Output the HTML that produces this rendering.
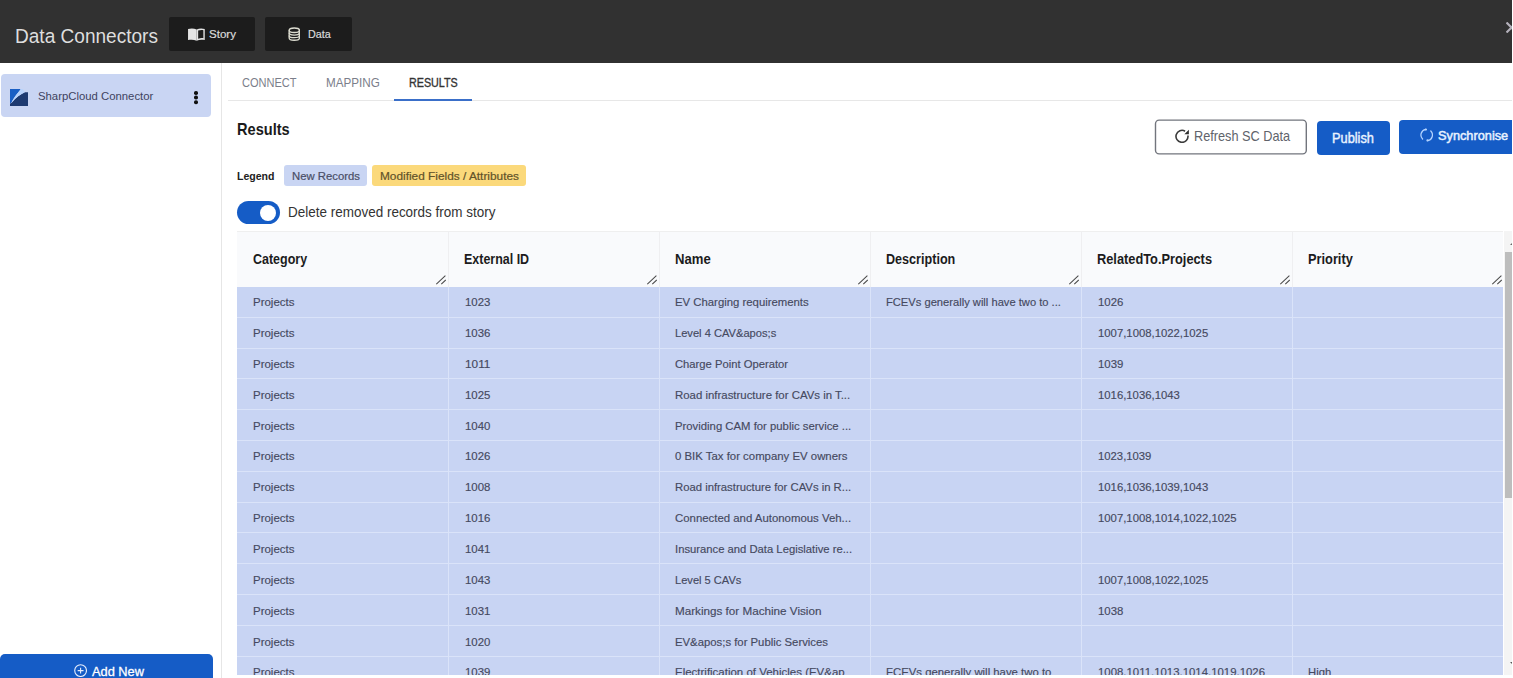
<!DOCTYPE html>
<html>
<head>
<meta charset="utf-8">
<title>Data Connectors</title>
<style>
*{box-sizing:border-box;margin:0;padding:0}
html,body{width:1513px;height:678px;overflow:hidden;background:#fff}
body{font-family:"Liberation Sans",sans-serif;position:relative;color:#222}
#clip{position:absolute;left:0;top:0;width:1512px;height:678px;overflow:hidden}
.abs{position:absolute}
.t{position:absolute;white-space:pre;line-height:1;transform-origin:0 50%}
#hdr{left:0;top:0;width:1513px;height:62.6px;background:#313131}
.hbtn{top:17px;height:34px;background:#1c1c1c;border-radius:2px}
#side{left:0;top:62.6px;width:222px;height:616px;background:#fff;border-right:1px solid #e6e6e6}
#item{left:1px;top:74px;width:210px;height:43px;background:#c9d5f3;border-radius:4px}
#addnew{left:0;top:654px;width:212.6px;height:30px;background:#155cc6;border-radius:5px 5px 0 0}
#tabline{left:228px;top:100px;width:1285px;height:1px;background:#e7e7e7}
#tabsel{left:393.5px;top:99px;width:78.5px;height:2px;background:#3a6fc9}
.btn{border-radius:4px}
.chip{height:21.3px;border-radius:3px}
#tbl{left:237px;top:231px;width:1266px;height:444.2px;background:#c8d4f3;overflow:hidden}
#thead{left:0;top:0;width:1267px;height:56px;background:#f9fafc;border-top:1px solid #efefef}
.rs{left:0;width:1267px;height:1px;background:#dae3f9}
.cs{top:56px;width:1px;height:400px;background:#dae3f9}
.hs{top:0;width:1px;height:56px;background:#efeff1}
</style>
</head>
<body>
<div id="clip">

<div id="hdr" class="abs"></div>
<div class="t" style="left:15.20px;top:25.85px;font-size:20.5px;color:#dedede;transform:scaleX(0.9295);">Data Connectors</div>
<div class="abs hbtn" style="left:169px;width:85.7px"></div>
<div class="abs hbtn" style="left:265px;width:87px"></div>
<svg class="abs" style="left:188.2px;top:27.8px" width="16.8" height="13" viewBox="0 0 18 14"><path d="M0 1.2 C3 0 6.4 0.2 9.3 1.7 L9.3 13.6 C6.4 12.4 3 12.2 0 13 Z" fill="#e4e4e4"/><path d="M9.3 1.7 C12 0.2 15 0 18 1.2 L18 13 C15 12.2 12 12.4 9.3 13.6 Z M10.9 2.8 L10.9 11.5 C13 10.8 15 10.7 16.5 11 L16.5 2.4 C15 2 13 2.1 10.9 2.8 Z" fill="#e4e4e4" fill-rule="evenodd"/></svg>
<div class="t" style="left:209.00px;top:28.99px;font-size:11px;color:#dadada;transform:scaleX(1.0511);-webkit-text-stroke:0.2px #dadada;">Story</div>
<svg class="abs" style="left:287.8px;top:26.8px" width="12.6" height="14.4" viewBox="0 0 14 15.5" fill="none" stroke="#dcdcd0" stroke-width="1.5"><ellipse cx="7" cy="3.4" rx="5.7" ry="2.5"/><path d="M1.3 3.4 V12 C1.3 13.4 3.8 14.5 7 14.5 S12.7 13.4 12.7 12 V3.4"/><path d="M1.3 6.2 C1.3 7.6 3.8 8.7 7 8.7 S12.7 7.6 12.7 6.2"/><path d="M1.3 9.1 C1.3 10.5 3.8 11.6 7 11.6 S12.7 10.5 12.7 9.1"/></svg>
<div class="t" style="left:307.60px;top:28.99px;font-size:11px;color:#dadada;transform:scaleX(0.9806);-webkit-text-stroke:0.2px #dadada;">Data</div>
<svg class="abs" style="left:1505.5px;top:22px" width="11" height="11" viewBox="0 0 11 11" stroke="#b4b1bb" stroke-width="2.2" fill="none"><path d="M0.5 0.5 L10.5 10.5 M10.5 0.5 L0.5 10.5"/></svg>
<div id="side" class="abs"></div>
<div id="item" class="abs"></div>
<svg class="abs" style="left:10.3px;top:88.5px" width="18.1" height="17.5" viewBox="0 0 100 100" preserveAspectRatio="none"><path d="M0 0 H59 C50 16 24 44 9 76 L0 84 Z" fill="#1a5fc4"/><path d="M100 18 H82 C60 28 30 50 9 79 L0 84 V100 H100 Z" fill="#1e3a70"/><path d="M59 0 H70 L82 18 C60 28 30 50 9 79 L9 76 C24 44 50 16 59 0 Z" fill="#b9d3fb"/></svg>
<div class="t" style="left:38.20px;top:90.63px;font-size:11.3px;color:#3e4360;transform:scaleX(1.0033);">SharpCloud Connector</div>
<div class="abs" style="left:194.3px;top:91.2px;width:3.6px;height:3.6px;border-radius:50%;background:#111;box-shadow:0 4.6px 0 #111,0 9.2px 0 #111"></div>
<div id="addnew" class="abs"></div>
<svg class="abs" style="left:73.8px;top:664.2px" width="13.2" height="13.2" viewBox="0 0 13 13" fill="none" stroke="#e8eefc" stroke-width="1.1"><circle cx="6.5" cy="6.5" r="5.8"/><path d="M6.5 3.6 V9.4 M3.6 6.5 H9.4"/></svg>
<div class="t" style="left:92.00px;top:665.03px;font-size:13.2px;color:#fff;transform:scaleX(0.9717);-webkit-text-stroke:0.3px #fff;">Add New</div>
<div class="t" style="left:241.80px;top:76.73px;font-size:12.6px;color:#7b7e8a;transform:scaleX(0.8767);">CONNECT</div>
<div class="t" style="left:325.60px;top:76.73px;font-size:12.6px;color:#7b7e8a;transform:scaleX(0.9278);">MAPPING</div>
<div class="t" style="left:408.80px;top:76.73px;font-size:12.6px;color:#333;transform:scaleX(0.8521);-webkit-text-stroke:0.35px #333;">RESULTS</div>
<div id="tabline" class="abs"></div><div id="tabsel" class="abs"></div>
<div class="t" style="left:237.30px;top:121.49px;font-size:16.2px;color:#1b1b1b;font-weight:bold;transform:scaleX(0.9011);">Results</div>
<svg class="abs" style="left:1153px;top:118px" width="157" height="39" viewBox="0 0 157 39"><rect x="2.5" y="2.1" width="150.8" height="33.8" rx="3.6" fill="#fff" stroke="#72757d" stroke-width="1.4"/></svg>
<svg class="abs" style="left:1175.1px;top:128.5px" width="14" height="14.4" viewBox="0 0 14 14.4"><path d="M12.94 6.5 A6 6 0 1 1 10.1 2.2" fill="none" stroke="#3a3a3a" stroke-width="1.6"/><path d="M13.9 0.7 V5.2 H9.4 Z" fill="#2e2e2e"/></svg>
<div class="t" style="left:1194.20px;top:128.90px;font-size:14.3px;color:#60636b;transform:scaleX(0.8901);">Refresh SC Data</div>
<div class="abs btn" style="left:1317px;top:120.8px;width:72.6px;height:33.8px;background:#155cc6"></div>
<div class="t" style="left:1332.30px;top:130.60px;font-size:14.3px;color:#e8f2ff;transform:scaleX(0.8954);-webkit-text-stroke:0.45px #e8f2ff;">Publish</div>
<div class="abs btn" style="left:1399.4px;top:119.9px;width:130px;height:34px;background:#155cc6"></div>
<svg class="abs" style="left:1419.6px;top:128.4px" width="13.4" height="14" viewBox="0 0 13.4 14" fill="none" stroke="#b4d4ff" stroke-width="1.25" stroke-linecap="round"><path d="M5.6 1.4 A5.7 5.7 0 0 0 2.6 11"/><path d="M7.8 12.6 A5.7 5.7 0 0 0 10.8 3"/><circle cx="5.9" cy="1.5" r="0.5" fill="#b4d4ff"/><circle cx="7.5" cy="12.5" r="0.5" fill="#b4d4ff"/></svg>
<div class="t" style="left:1438.00px;top:128.79px;font-size:13.6px;color:#e8f2ff;transform:scaleX(0.9383);-webkit-text-stroke:0.5px #e8f2ff;">Synchronise</div>
<div class="t" style="left:237.00px;top:170.69px;font-size:11px;color:#222;font-weight:bold;transform:scaleX(0.9585);">Legend</div>
<div class="abs chip" style="left:283.7px;top:165px;width:83.3px;background:#c9d5f3"></div>
<div class="t" style="left:291.70px;top:171.13px;font-size:11.3px;color:#4a4e66;transform:scaleX(1.0028);-webkit-text-stroke:0.2px #4a4e66;">New Records</div>
<div class="abs chip" style="left:372.2px;top:165px;width:154.3px;background:#fbd97b"></div>
<div class="t" style="left:380.00px;top:171.13px;font-size:11.3px;color:#62532a;transform:scaleX(1.0491);-webkit-text-stroke:0.2px #62532a;">Modified Fields / Attributes</div>
<div class="abs" style="left:237px;top:200.9px;width:42.8px;height:23.3px;border-radius:12px;background:#155cc6"></div>
<div class="abs" style="left:259.6px;top:205px;width:16px;height:16px;border-radius:50%;background:#fff"></div>
<div class="t" style="left:288.00px;top:204.90px;font-size:14.3px;color:#333;transform:scaleX(0.9428);">Delete removed records from story</div>
<div id="tbl" class="abs"><div id="thead" class="abs"></div>
<div class="abs hs" style="left:211px"></div><div class="abs cs" style="left:211px"></div>
<div class="abs hs" style="left:422px"></div><div class="abs cs" style="left:422px"></div>
<div class="abs hs" style="left:633px"></div><div class="abs cs" style="left:633px"></div>
<div class="abs hs" style="left:844px"></div><div class="abs cs" style="left:844px"></div>
<div class="abs hs" style="left:1055px"></div><div class="abs cs" style="left:1055px"></div>
<div class="abs rs" style="top:86px"></div>
<div class="abs rs" style="top:117px"></div>
<div class="abs rs" style="top:147px"></div>
<div class="abs rs" style="top:178px"></div>
<div class="abs rs" style="top:209px"></div>
<div class="abs rs" style="top:240px"></div>
<div class="abs rs" style="top:271px"></div>
<div class="abs rs" style="top:301px"></div>
<div class="abs rs" style="top:332px"></div>
<div class="abs rs" style="top:363px"></div>
<div class="abs rs" style="top:394px"></div>
<div class="abs rs" style="top:425px"></div>
</div>
<svg class="abs" style="left:435.7px;top:274.8px" width="10.5" height="10" viewBox="0 0 10.5 10" stroke="#4a4a4a" stroke-width="1.1" fill="none"><path d="M0.3 9.2 L9.4 0.6 M5.3 9.2 L9.8 5"/></svg>
<svg class="abs" style="left:646.7px;top:274.8px" width="10.5" height="10" viewBox="0 0 10.5 10" stroke="#4a4a4a" stroke-width="1.1" fill="none"><path d="M0.3 9.2 L9.4 0.6 M5.3 9.2 L9.8 5"/></svg>
<svg class="abs" style="left:857.7px;top:274.8px" width="10.5" height="10" viewBox="0 0 10.5 10" stroke="#4a4a4a" stroke-width="1.1" fill="none"><path d="M0.3 9.2 L9.4 0.6 M5.3 9.2 L9.8 5"/></svg>
<svg class="abs" style="left:1068.7px;top:274.8px" width="10.5" height="10" viewBox="0 0 10.5 10" stroke="#4a4a4a" stroke-width="1.1" fill="none"><path d="M0.3 9.2 L9.4 0.6 M5.3 9.2 L9.8 5"/></svg>
<svg class="abs" style="left:1279.7px;top:274.8px" width="10.5" height="10" viewBox="0 0 10.5 10" stroke="#4a4a4a" stroke-width="1.1" fill="none"><path d="M0.3 9.2 L9.4 0.6 M5.3 9.2 L9.8 5"/></svg>
<svg class="abs" style="left:1491.7px;top:274.8px" width="10.5" height="10" viewBox="0 0 10.5 10" stroke="#4a4a4a" stroke-width="1.1" fill="none"><path d="M0.3 9.2 L9.4 0.6 M5.3 9.2 L9.8 5"/></svg>
<div class="t" style="left:253.10px;top:252.45px;font-size:14px;color:#1c1c1c;font-weight:bold;transform:scaleX(0.8915);">Category</div>
<div class="t" style="left:464.10px;top:252.45px;font-size:14px;color:#1c1c1c;font-weight:bold;transform:scaleX(0.8901);">External ID</div>
<div class="t" style="left:675.10px;top:252.45px;font-size:14px;color:#1c1c1c;font-weight:bold;transform:scaleX(0.9386);">Name</div>
<div class="t" style="left:886.10px;top:252.45px;font-size:14px;color:#1c1c1c;font-weight:bold;transform:scaleX(0.8998);">Description</div>
<div class="t" style="left:1097.10px;top:252.45px;font-size:14px;color:#1c1c1c;font-weight:bold;transform:scaleX(0.9143);">RelatedTo.Projects</div>
<div class="t" style="left:1308.10px;top:252.45px;font-size:14px;color:#1c1c1c;font-weight:bold;transform:scaleX(0.9140);">Priority</div>
<div class="abs" style="left:0;top:0;width:1512px;height:675px;overflow:hidden">
<div class="t" style="left:253.20px;top:297.09px;font-size:11.35px;color:#454960;transform:scaleX(1.0101);-webkit-text-stroke:0.15px #454960;">Projects</div>
<div class="t" style="left:464.50px;top:297.09px;font-size:11.35px;color:#454960;transform:scaleX(1.0059);-webkit-text-stroke:0.15px #454960;">1023</div>
<div class="t" style="left:675.20px;top:297.09px;font-size:11.35px;color:#454960;transform:scaleX(1.0002);-webkit-text-stroke:0.15px #454960;">EV Charging requirements</div>
<div class="t" style="left:886.20px;top:297.09px;font-size:11.35px;color:#454960;transform:scaleX(0.9837);-webkit-text-stroke:0.15px #454960;">FCEVs generally will have two to ...</div>
<div class="t" style="left:1097.50px;top:297.09px;font-size:11.35px;color:#454960;transform:scaleX(1.0059);-webkit-text-stroke:0.15px #454960;">1026</div>
<div class="t" style="left:253.20px;top:327.95px;font-size:11.35px;color:#454960;transform:scaleX(1.0101);-webkit-text-stroke:0.15px #454960;">Projects</div>
<div class="t" style="left:464.50px;top:327.95px;font-size:11.35px;color:#454960;transform:scaleX(1.0059);-webkit-text-stroke:0.15px #454960;">1036</div>
<div class="t" style="left:675.20px;top:327.95px;font-size:11.35px;color:#454960;transform:scaleX(0.9806);-webkit-text-stroke:0.15px #454960;">Level 4 CAV&amp;apos;s</div>
<div class="t" style="left:1097.50px;top:327.95px;font-size:11.35px;color:#454960;transform:scaleX(0.9981);-webkit-text-stroke:0.15px #454960;">1007,1008,1022,1025</div>
<div class="t" style="left:253.20px;top:358.80px;font-size:11.35px;color:#454960;transform:scaleX(1.0101);-webkit-text-stroke:0.15px #454960;">Projects</div>
<div class="t" style="left:464.50px;top:358.80px;font-size:11.35px;color:#454960;transform:scaleX(1.0407);-webkit-text-stroke:0.15px #454960;">1011</div>
<div class="t" style="left:675.20px;top:358.80px;font-size:11.35px;color:#454960;transform:scaleX(0.9909);-webkit-text-stroke:0.15px #454960;">Charge Point Operator</div>
<div class="t" style="left:1097.50px;top:358.80px;font-size:11.35px;color:#454960;transform:scaleX(1.0059);-webkit-text-stroke:0.15px #454960;">1039</div>
<div class="t" style="left:253.20px;top:389.66px;font-size:11.35px;color:#454960;transform:scaleX(1.0101);-webkit-text-stroke:0.15px #454960;">Projects</div>
<div class="t" style="left:464.50px;top:389.66px;font-size:11.35px;color:#454960;transform:scaleX(1.0059);-webkit-text-stroke:0.15px #454960;">1025</div>
<div class="t" style="left:675.20px;top:389.66px;font-size:11.35px;color:#454960;transform:scaleX(1.0056);-webkit-text-stroke:0.15px #454960;">Road infrastructure for CAVs in T...</div>
<div class="t" style="left:1097.50px;top:389.66px;font-size:11.35px;color:#454960;transform:scaleX(0.9974);-webkit-text-stroke:0.15px #454960;">1016,1036,1043</div>
<div class="t" style="left:253.20px;top:420.51px;font-size:11.35px;color:#454960;transform:scaleX(1.0101);-webkit-text-stroke:0.15px #454960;">Projects</div>
<div class="t" style="left:464.50px;top:420.51px;font-size:11.35px;color:#454960;transform:scaleX(1.0059);-webkit-text-stroke:0.15px #454960;">1040</div>
<div class="t" style="left:675.20px;top:420.51px;font-size:11.35px;color:#454960;transform:scaleX(0.9981);-webkit-text-stroke:0.15px #454960;">Providing CAM for public service ...</div>
<div class="t" style="left:253.20px;top:451.37px;font-size:11.35px;color:#454960;transform:scaleX(1.0101);-webkit-text-stroke:0.15px #454960;">Projects</div>
<div class="t" style="left:464.50px;top:451.37px;font-size:11.35px;color:#454960;transform:scaleX(1.0059);-webkit-text-stroke:0.15px #454960;">1026</div>
<div class="t" style="left:675.20px;top:451.37px;font-size:11.35px;color:#454960;transform:scaleX(1.0034);-webkit-text-stroke:0.15px #454960;">0 BIK Tax for company EV owners</div>
<div class="t" style="left:1097.50px;top:451.37px;font-size:11.35px;color:#454960;transform:scaleX(0.9958);-webkit-text-stroke:0.15px #454960;">1023,1039</div>
<div class="t" style="left:253.20px;top:482.22px;font-size:11.35px;color:#454960;transform:scaleX(1.0101);-webkit-text-stroke:0.15px #454960;">Projects</div>
<div class="t" style="left:464.50px;top:482.22px;font-size:11.35px;color:#454960;transform:scaleX(1.0059);-webkit-text-stroke:0.15px #454960;">1008</div>
<div class="t" style="left:675.20px;top:482.22px;font-size:11.35px;color:#454960;transform:scaleX(0.9957);-webkit-text-stroke:0.15px #454960;">Road infrastructure for CAVs in R...</div>
<div class="t" style="left:1097.50px;top:482.22px;font-size:11.35px;color:#454960;transform:scaleX(0.9981);-webkit-text-stroke:0.15px #454960;">1016,1036,1039,1043</div>
<div class="t" style="left:253.20px;top:513.08px;font-size:11.35px;color:#454960;transform:scaleX(1.0101);-webkit-text-stroke:0.15px #454960;">Projects</div>
<div class="t" style="left:464.50px;top:513.08px;font-size:11.35px;color:#454960;transform:scaleX(1.0059);-webkit-text-stroke:0.15px #454960;">1016</div>
<div class="t" style="left:675.20px;top:513.08px;font-size:11.35px;color:#454960;transform:scaleX(1.0043);-webkit-text-stroke:0.15px #454960;">Connected and Autonomous Veh...</div>
<div class="t" style="left:1097.50px;top:513.08px;font-size:11.35px;color:#454960;transform:scaleX(0.9986);-webkit-text-stroke:0.15px #454960;">1007,1008,1014,1022,1025</div>
<div class="t" style="left:253.20px;top:543.93px;font-size:11.35px;color:#454960;transform:scaleX(1.0101);-webkit-text-stroke:0.15px #454960;">Projects</div>
<div class="t" style="left:464.50px;top:543.93px;font-size:11.35px;color:#454960;transform:scaleX(1.0059);-webkit-text-stroke:0.15px #454960;">1041</div>
<div class="t" style="left:675.20px;top:543.93px;font-size:11.35px;color:#454960;transform:scaleX(0.9923);-webkit-text-stroke:0.15px #454960;">Insurance and Data Legislative re...</div>
<div class="t" style="left:253.20px;top:574.79px;font-size:11.35px;color:#454960;transform:scaleX(1.0101);-webkit-text-stroke:0.15px #454960;">Projects</div>
<div class="t" style="left:464.50px;top:574.79px;font-size:11.35px;color:#454960;transform:scaleX(1.0059);-webkit-text-stroke:0.15px #454960;">1043</div>
<div class="t" style="left:675.20px;top:574.79px;font-size:11.35px;color:#454960;transform:scaleX(0.9780);-webkit-text-stroke:0.15px #454960;">Level 5 CAVs</div>
<div class="t" style="left:1097.50px;top:574.79px;font-size:11.35px;color:#454960;transform:scaleX(0.9981);-webkit-text-stroke:0.15px #454960;">1007,1008,1022,1025</div>
<div class="t" style="left:253.20px;top:605.64px;font-size:11.35px;color:#454960;transform:scaleX(1.0101);-webkit-text-stroke:0.15px #454960;">Projects</div>
<div class="t" style="left:464.50px;top:605.64px;font-size:11.35px;color:#454960;transform:scaleX(1.0059);-webkit-text-stroke:0.15px #454960;">1031</div>
<div class="t" style="left:675.20px;top:605.64px;font-size:11.35px;color:#454960;transform:scaleX(1.0289);-webkit-text-stroke:0.15px #454960;">Markings for Machine Vision</div>
<div class="t" style="left:1097.50px;top:605.64px;font-size:11.35px;color:#454960;transform:scaleX(1.0059);-webkit-text-stroke:0.15px #454960;">1038</div>
<div class="t" style="left:253.20px;top:636.50px;font-size:11.35px;color:#454960;transform:scaleX(1.0101);-webkit-text-stroke:0.15px #454960;">Projects</div>
<div class="t" style="left:464.50px;top:636.50px;font-size:11.35px;color:#454960;transform:scaleX(1.0059);-webkit-text-stroke:0.15px #454960;">1020</div>
<div class="t" style="left:675.20px;top:636.50px;font-size:11.35px;color:#454960;transform:scaleX(0.9986);-webkit-text-stroke:0.15px #454960;">EV&amp;apos;s for Public Services</div>
<div class="t" style="left:253.20px;top:667.35px;font-size:11.35px;color:#454960;transform:scaleX(1.0101);-webkit-text-stroke:0.15px #454960;">Projects</div>
<div class="t" style="left:464.50px;top:667.35px;font-size:11.35px;color:#454960;transform:scaleX(1.0059);-webkit-text-stroke:0.15px #454960;">1039</div>
<div class="t" style="left:675.20px;top:667.35px;font-size:11.35px;color:#454960;transform:scaleX(1.0117);-webkit-text-stroke:0.15px #454960;">Electrification of Vehicles (EV&amp;ap</div>
<div class="t" style="left:886.20px;top:667.35px;font-size:11.35px;color:#454960;transform:scaleX(1.0013);-webkit-text-stroke:0.15px #454960;">FCEVs generally will have two to</div>
<div class="t" style="left:1097.50px;top:667.35px;font-size:11.35px;color:#454960;transform:scaleX(1.0039);-webkit-text-stroke:0.15px #454960;">1008,1011,1013,1014,1019,1026</div>
<div class="t" style="left:1308.20px;top:667.35px;font-size:11.35px;color:#454960;transform:scaleX(0.9938);-webkit-text-stroke:0.15px #454960;">High</div>
</div>
<div class="abs" style="left:1504px;top:231px;width:9px;height:444.2px;background:#f4f4f4"></div>
<div class="abs" style="left:1505.3px;top:251.8px;width:7px;height:246.4px;background:#bdbdbd"></div>
<div class="abs" style="left:1509.5px;top:242px;width:0;height:0;border-left:3px solid transparent;border-right:3px solid transparent;border-bottom:3.5px solid #666"></div>
<div class="abs" style="left:1509.5px;top:662px;width:0;height:0;border-left:3px solid transparent;border-right:3px solid transparent;border-top:3.5px solid #555"></div>
</div>
</body>
</html>
